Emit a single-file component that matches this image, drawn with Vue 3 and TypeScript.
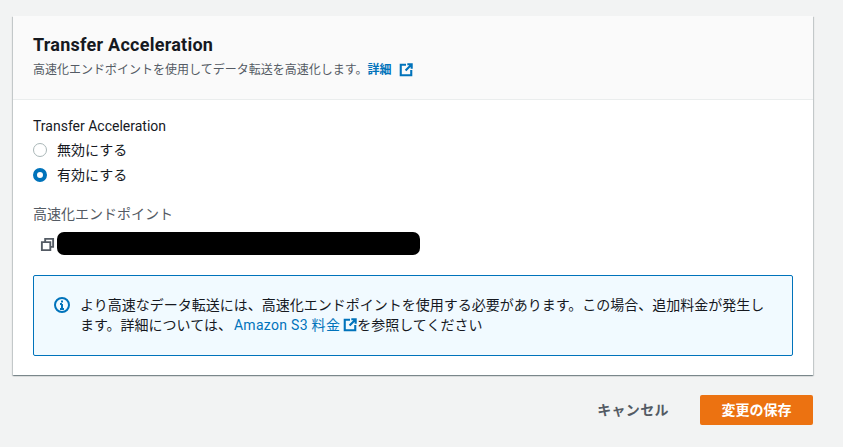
<script setup lang="ts">
const options = [
  { label: '無効にする', checked: false },
  { label: '有効にする', checked: true },
]
</script>

<template>
  <div class="page">
    <section class="card">
      <header class="head">
        <h2>Transfer Acceleration</h2>
        <p class="desc">
          高速化エンドポイントを使用してデータ転送を高速化します。<a class="link strong">詳細</a>
          <svg class="ext big" viewBox="0 0 16 16"><path d="M8 2H2v12h12V8M7.500 8.500l6-6M9.500 1.500h5v5" /></svg>
        </p>
      </header>
      <div class="body">
        <div class="label">Transfer Acceleration</div>
        <div class="radios">
          <div v-for="o in options" :key="o.label" class="radio">
            <span class="dot" :class="{ on: o.checked }"></span>
            <span>{{ o.label }}</span>
          </div>
        </div>
        <div class="label endpoint">高速化エンドポイント</div>
        <div class="value">
          <svg class="copy" viewBox="0 0 16 16"><path d="M5.500 5V2h8.500v8.500H11M2 5.500h9V14H2z" /></svg>
          <span class="mask"></span>
        </div>
        <div class="alert">
          <svg class="info" viewBox="0 0 16 16">
            <circle cx="8" cy="8" r="7" />
            <path d="M8 7v5M6 12h4M6 7h2" />
            <path class="dotted" d="M7 3.500h2v2H7z" />
          </svg>
          <p>
            より高速なデータ転送には、高速化エンドポイントを使用する必要があります。この場合、追加料金が発生します。詳細については、<a class="link wide">Amazon S3 料金</a>
            <svg class="ext" viewBox="0 0 16 16"><path d="M8 2H2v12h12V8M7.500 8.500l6-6M9.500 1.500h5v5" /></svg>を参照してください
          </p>
        </div>
      </div>
    </section>
    <footer class="actions">
      <button class="cancel">キャンセル</button>
      <button class="save">変更の保存</button>
    </footer>
  </div>
</template>

<style>
html, body { margin: 0; background: #f2f3f3; }
</style>

<style scoped>
.page {
  width: 843px;
  height: 447px;
  overflow: hidden;
  box-sizing: border-box;
  padding: 16px 30px 0 13px;
  background: #f2f3f3;
  color: #16191f;
  font-family: Roboto, "Noto Sans CJK JP", sans-serif;
  font-size: 14px;
  line-height: 22px;
}
.card {
  background: #fff;
  height: 359px;
  box-sizing: border-box;
  box-shadow: 0 1px 1px 0 rgba(0, 28, 36, 0.3), 1px 1px 1px 0 rgba(0, 28, 36, 0.15), -1px 1px 1px 0 rgba(0, 28, 36, 0.15);
}
.head {
  height: 84px;
  box-sizing: border-box;
  padding: 18px 20px 0;
  background: #fafafa;
  border-bottom: 1px solid #eaeded;
}
h2 {
  margin: 0;
  font-size: 18px;
  line-height: 22px;
  font-weight: 700;
  letter-spacing: 0.25px;
}
.desc {
  margin: 5px 0 0;
  font-size: 12px;
  line-height: 16px;
  color: #545b64;
  display: flex;
  align-items: center;
  height: 18px;
}
.link { color: #0073bb; }
.strong { font-weight: 700; }
.wide { letter-spacing: 0.3px; margin-left: 2px; }
.ext {
  width: 14px;
  height: 14px;
  vertical-align: -2px;
  fill: none;
  stroke: #0073bb;
  stroke-width: 2.4;
}
.big { margin-left: 8px; }
.body { padding: 15px 20px 0; }
.label { font-size: 14px; line-height: 22px; }
.radios { display: flex; flex-direction: column; gap: 3px; margin-top: 2px; }
.radio { display: flex; align-items: center; gap: 10px; height: 22px; }
.dot {
  width: 14px;
  height: 14px;
  box-sizing: border-box;
  border-radius: 50%;
  background: #fff;
  border: 1px solid #aab7b8;
}
.dot.on { border: 4px solid #0073bb; }
.endpoint { margin-top: 17px; color: #545b64; }
.value {
  display: flex;
  align-items: center;
  height: 24px;
  margin-top: 6px;
  padding-left: 7px;
}
.copy {
  width: 15px;
  height: 15px;
  margin-top: 2px;
  fill: none;
  stroke: #545b64;
  stroke-width: 2;
}
.mask {
  width: 363px;
  height: 23px;
  margin-left: 2px;
  border-radius: 7px;
  background: #000;
}
.alert {
  display: flex;
  gap: 10px;
  height: 81px;
  box-sizing: border-box;
  margin-top: 20px;
  padding: 19px 20px 0;
  width: 760px;
  background: #f1faff;
  border: 1px solid #0073bb;
  border-radius: 2px;
}
.alert p { margin: 0; width: 690px; font-size: 14px; line-height: 20px; flex: none; }
.alert .ext { margin-left: 3px; }
.info {
  flex: none;
  width: 16px;
  height: 16px;
  margin-top: 2px;
  fill: none;
  stroke: #0073bb;
  stroke-width: 2;
}
.info .dotted { fill: #0073bb; stroke: none; }
.actions {
  display: flex;
  justify-content: flex-end;
  align-items: center;
  margin-top: 20px;
}
button {
  font: inherit;
  font-weight: 700;
  border: 0;
  cursor: pointer;
  height: 30px;
  padding: 0;
}
.cancel { background: none; color: #545b64; width: 72px; margin-right: 31px; letter-spacing: 0.3px; }
.save { background: #ec7211; color: #fff; width: 113px; border-radius: 2px; }
</style>
